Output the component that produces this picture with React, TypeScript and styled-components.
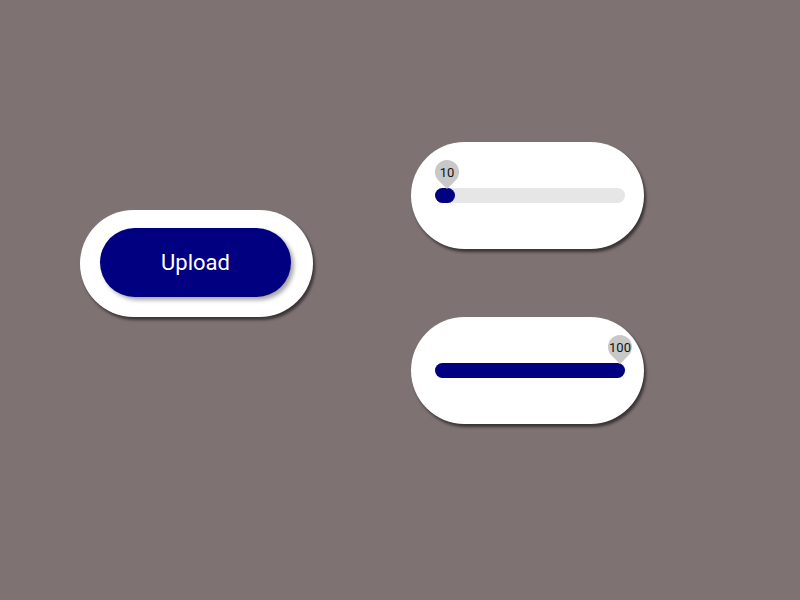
import React from 'react';
import styled, { createGlobalStyle } from 'styled-components';

const GlobalStyle = createGlobalStyle`
  html, body {
    margin: 0;
    padding: 0;
    width: 800px;
    height: 600px;
    overflow: hidden;
    background: #7e7273;
    font-family: Roboto, "Liberation Sans", sans-serif;
  }
`;

const Stage = styled.div`
  display: flex;
  align-items: flex-start;
  gap: 98px;
  padding-left: 80px;
  width: 800px;
  height: 600px;
  box-sizing: border-box;
`;

const Pill = styled.div<{ $top?: number }>`
  width: 233px;
  height: 107px;
  border-radius: 54px;
  background: #fff;
  box-shadow: 2px 3px 3px rgba(0, 0, 0, 0.55);
  box-sizing: border-box;
  margin-top: ${(p) => p.$top ?? 0}px;
`;

const UploadPill = styled(Pill)`
  display: flex;
  align-items: center;
  padding-left: 20px;
  padding-bottom: 3px;
`;

const UploadButton = styled.button`
  width: 191px;
  height: 69px;
  border: none;
  border-radius: 35px;
  background: #000080;
  color: #fff;
  font-family: Roboto, "Liberation Sans", sans-serif;
  font-size: 22px;
  box-shadow: 3px 3px 4px rgba(0, 0, 0, 0.35);
  cursor: pointer;
`;

const Column = styled.div`
  display: flex;
  flex-direction: column;
  gap: 68px;
  margin-top: 142px;
`;

const SliderPill = styled(Pill)`
  padding: 46px 19px 0 24px;
`;

const Track = styled.div`
  position: relative;
  width: 190px;
  height: 15px;
  border-radius: 8px;
  background: #e6e6e6;
`;

const Fill = styled.div`
  height: 100%;
  border-radius: 8px;
  background: #000080;
`;

const Pin = styled.div`
  position: absolute;
  bottom: 19px;
  width: 24px;
  height: 24px;
  margin-left: -12px;
  display: flex;
  align-items: center;
  justify-content: center;
  font-size: 13px;
  color: #111;

  &::before {
    content: '';
    position: absolute;
    inset: 0;
    background: #c8c8c8;
    border-radius: 50% 50% 50% 0;
    transform: rotate(-45deg);
  }

  span {
    position: relative;
  }
`;

function Slider({ value, fillWidth, pinX }: { value: number; fillWidth: number; pinX: number }) {
  return (
    <SliderPill>
      <Track>
        <Fill style={{ width: fillWidth }} />
        <Pin style={{ left: pinX }}>
          <span>{value}</span>
        </Pin>
      </Track>
    </SliderPill>
  );
}

export default function App() {
  return (
    <>
      <GlobalStyle />
      <Stage>
        <UploadPill $top={210}>
          <UploadButton>Upload</UploadButton>
        </UploadPill>
        <Column>
          <Slider value={10} fillWidth={20} pinX={12} />
          <Slider value={100} fillWidth={190} pinX={185} />
        </Column>
      </Stage>
    </>
  );
}
